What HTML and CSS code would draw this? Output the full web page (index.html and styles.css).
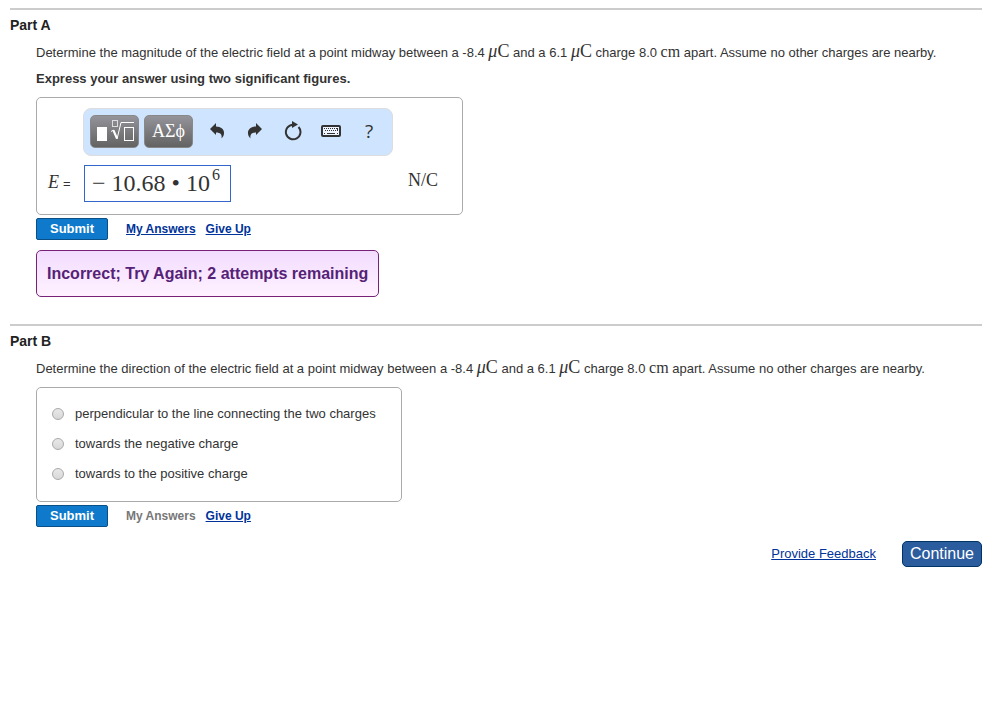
FILE: index.html
```html
<!DOCTYPE html>
<html lang="en">
<head>
    <meta charset="UTF-8">
    <meta name="viewport" content="width=device-width, initial-scale=1.0">
    <title>Electric Field Problem</title>
    <link rel="stylesheet" href="styles.css">
</head>
<body>
    <section class="part">
        <h2>Part A</h2>
        <form class="part-body">
            <p>Determine the magnitude of the electric field at a point midway between a -8.4 <span class="math"><i>μ</i>C</span> and a 6.1 <span class="math"><i>μ</i>C</span> charge 8.0 <span class="unit">cm</span> apart. Assume no other charges are nearby.</p>
            <p class="instructions">Express your answer using two significant figures.</p>
            <div class="box answer">
                <div class="toolbar">
                    <button type="button" class="palette" aria-label="Templates">
                        <svg width="38" height="24" viewBox="0 0 38 24" fill="none" stroke="#fff">
                            <rect x="1" y="8" width="10" height="14" fill="#fff" stroke="none"/>
                            <rect x="16.5" y="1.5" width="5" height="6" stroke="#ddd"/>
                            <path d="M15 12.500l2.500-1.500L21 20l4-16.500H38"/>
                            <path d="M17.500 11.500L21 19.500" stroke-width="2"/>
                            <rect x="28.5" y="8.5" width="9" height="13"/>
                        </svg>
                    </button>
                    <button type="button" class="palette" aria-label="Symbols">ΑΣϕ</button>
                    <button type="button" class="tool" aria-label="Undo">
                        <svg width="16" height="16" viewBox="0 0 16 16"><path fill="#333" d="M7 0v3.500c5 0 8.500 3 8 7-.2 2-1 3.500-2.500 5 .8-4-1-6-5.500-6V12L1 6z"/></svg>
                    </button>
                    <button type="button" class="tool" aria-label="Redo">
                        <svg width="16" height="16" viewBox="0 0 16 16"><path fill="#333" d="M9 0v3.500c-5 0-8.500 3-8 7 .2 2 1 3.500 2.500 5-.8-4 1-6 5.500-6V12l6-6z"/></svg>
                    </button>
                    <button type="button" class="tool" aria-label="Reset">
                        <svg width="18" height="20" viewBox="0 0 18 20"><path fill="none" stroke="#333" stroke-width="2" d="M14.500 6A7.300 7.300 0 1 1 9 3.700"/><path fill="#333" d="M8 0l6 3.500L8 7z"/></svg>
                    </button>
                    <button type="button" class="tool" aria-label="Keyboard">
                        <svg width="20" height="12" viewBox="0 0 20 12" fill="none" stroke="#333">
                            <rect x="1" y="1" width="18" height="10" rx="1" stroke-width="2" fill="#eef5ff"/>
                            <path d="M3 3.500h13M4 5.500h12" stroke-dasharray="1 1"/>
                            <path d="M3 8.500h1M6 8.500h8M16 8.500h1M16.500 3v3"/>
                        </svg>
                    </button>
                    <button type="button" class="tool help" aria-label="Help">?</button>
                </div>
                <label class="variable" for="mantissa"><i>E</i> <span>=</span></label>
                <div class="entry">
                    <input type="text" id="mantissa" class="mantissa" value="− 10.68 • 10">
                    <input type="text" class="exponent" aria-label="Exponent" value="6">
                </div>
                <span class="answer-unit">N/C</span>
            </div>
            <div class="actions">
                <button type="submit" class="submit">Submit</button>
                <a href="#answers">My Answers</a>
                <a href="#giveup">Give Up</a>
            </div>
            <div class="feedback">Incorrect; Try Again; 2 attempts remaining</div>
        </form>
    </section>

    <section class="part">
        <h2>Part B</h2>
        <form class="part-body">
            <p>Determine the direction of the electric field at a point midway between a -8.4 <span class="math"><i>μ</i>C</span> and a 6.1 <span class="math"><i>μ</i>C</span> charge 8.0 <span class="unit">cm</span> apart. Assume no other charges are nearby.</p>
            <div class="box choices">
                <label><input type="radio" name="direction" value="1">perpendicular to the line connecting the two charges</label>
                <label><input type="radio" name="direction" value="2">towards the negative charge</label>
                <label><input type="radio" name="direction" value="3">towards to the positive charge</label>
            </div>
            <div class="actions">
                <button type="submit" class="submit">Submit</button>
                <span class="disabled">My Answers</span>
                <a href="#giveup">Give Up</a>
            </div>
        </form>
    </section>

    <footer>
        <a href="#feedback">Provide Feedback</a>
        <button type="button" class="continue">Continue</button>
    </footer>
</body>
</html>
```
FILE: styles.css
```css
* {
    box-sizing: border-box;
}
body {
    margin: 0;
    padding: 8px 18px 20px 10px;
    font-family: "Liberation Sans", Arial, sans-serif;
    font-size: 13px;
    line-height: 18px;
    color: #333;
    background: #fff;
}
button, input {
    font-family: inherit;
    margin: 0;
    padding: 0;
}
a {
    color: #039;
}
.part {
    border-top: 2px solid #ccc;
    padding-top: 6px;
}
.part + .part {
    margin-top: 27px;
}
h2 {
    margin: 0;
    font-size: 14px;
    line-height: 18px;
    color: #222;
}
.part-body {
    margin-left: 26px;
}
p {
    margin: 9px 0 8px;
}
.instructions {
    font-weight: bold;
    margin: 8px 0 9px;
}
.math, .unit {
    font-family: "Liberation Serif", "Times New Roman", serif;
    font-size: 18px;
    line-height: 16px;
}
.unit {
    font-size: 16px;
}
.box {
    width: fit-content;
    border: 1px solid #aaa;
    border-radius: 5px;
}

/* Part A answer editor */
.answer {
    display: grid;
    grid-template-columns: 35px 310px auto;
    row-gap: 9px;
    align-items: center;
    padding: 10px 24px 12px 11px;
}
.toolbar {
    grid-column: 2;
    display: flex;
    align-items: center;
    height: 48px;
    padding: 0 0 2px 6px;
    border: 1px solid #ddd;
    border-radius: 8px;
    background: #cfe5ff;
}
.palette {
    display: flex;
    align-items: center;
    justify-content: center;
    width: 49px;
    height: 33px;
    margin-right: 5px;
    border: 1px solid #888;
    border-radius: 5px;
    background: linear-gradient(#94939a, #636363);
    color: #fff;
    font-family: "Liberation Serif", serif;
    font-size: 18px;
}
.tool {
    display: flex;
    align-items: center;
    justify-content: center;
    width: 38px;
    height: 33px;
    border: 0;
    background: none;
    color: #333;
}
.help {
    font-family: "Open Sans", sans-serif;
    font-size: 19px;
}
.variable {
    grid-column: 1;
    padding-bottom: 2px;
    font-size: 14px;
}
.variable i {
    font-family: "Liberation Serif", serif;
    font-size: 18px;
}
.variable span {
    font-size: 13px;
}
.entry {
    display: flex;
    width: 147px;
    height: 37px;
    margin-left: 1px;
    padding-left: 7px;
    border: 1px solid #36c;
}
.entry input {
    border: 0;
    outline: 0;
    background: none;
    color: #333;
    font-family: "Liberation Serif", serif;
}
.mantissa {
    width: 120px;
    font-size: 24px;
}
.exponent {
    width: 12px;
    height: 18px;
    font-size: 16px;
}
.answer-unit {
    padding: 0 0 7px 15px;
    font-family: "Liberation Serif", serif;
    font-size: 18px;
}

.actions {
    display: flex;
    align-items: center;
    gap: 10px;
    margin-top: 3px;
    font-size: 12px;
    font-weight: bold;
}
.submit {
    width: 72px;
    height: 22px;
    margin-right: 8px;
    padding-bottom: 2px;
    border: 1px solid #0a4f85;
    border-radius: 2px;
    background: #0f7acc;
    color: #fff;
    font-size: 13px;
    font-weight: bold;
}
.disabled {
    color: #777;
}
.feedback {
    width: fit-content;
    margin-top: 10px;
    padding: 13px 10px;
    border: 1px solid #727;
    border-radius: 5px;
    background: linear-gradient(#f2dcff, #fff2ff);
    color: #527;
    font-size: 16px;
    font-weight: bold;
    line-height: 19px;
}

/* Part B choices */
.choices {
    display: grid;
    gap: 12px;
    margin-top: 9px;
    padding: 17px 25px 18px 15px;
}
.choices label {
    display: flex;
    align-items: center;
}
.choices input {
    appearance: none;
    width: 12px;
    height: 12px;
    margin-right: 11px;
    border: 1px solid #aaa;
    border-radius: 50%;
    background: linear-gradient(#e8e8e8, #d8d8d8);
}

footer {
    display: flex;
    justify-content: flex-end;
    align-items: center;
    gap: 26px;
    margin-top: 14px;
}
.continue {
    width: 80px;
    height: 26px;
    padding-bottom: 1px;
    border: 1px solid #036;
    border-radius: 5px;
    background: #2b5c9e;
    color: #fff;
    font-size: 16px;
}
```
